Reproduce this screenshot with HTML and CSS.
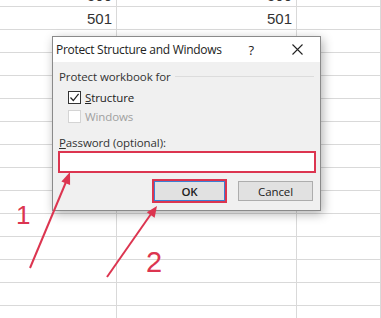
FILE: index.html
```html
<!DOCTYPE html>
<html lang="en">

<head>
    <meta charset="UTF-8">
    <meta name="viewport" content="width=device-width, initial-scale=1.0">
    <title>Protect Structure and Windows</title>
    <link rel="stylesheet" href="styles.css">
</head>

<body>
    <div class="sheet">
        <div class="row"><div class="cell">500</div><div class="cell">500</div><div class="cell"></div></div>
        <div class="row"><div class="cell">501</div><div class="cell">501</div><div class="cell"></div></div>
        <div class="row"><div class="cell">502</div><div class="cell">502</div><div class="cell"></div></div>
        <div class="row"><div class="cell"></div><div class="cell"></div><div class="cell"></div></div>
        <div class="row"><div class="cell"></div><div class="cell"></div><div class="cell"></div></div>
        <div class="row"><div class="cell"></div><div class="cell"></div><div class="cell"></div></div>
        <div class="row"><div class="cell"></div><div class="cell"></div><div class="cell"></div></div>
        <div class="row"><div class="cell"></div><div class="cell"></div><div class="cell"></div></div>
        <div class="row"><div class="cell"></div><div class="cell"></div><div class="cell"></div></div>
        <div class="row"><div class="cell"></div><div class="cell"></div><div class="cell"></div></div>
        <div class="row"><div class="cell"></div><div class="cell"></div><div class="cell"></div></div>
        <div class="row"><div class="cell"></div><div class="cell"></div><div class="cell"></div></div>
        <div class="row"><div class="cell"></div><div class="cell"></div><div class="cell"></div></div>
        <div class="row"><div class="cell"></div><div class="cell"></div><div class="cell"></div></div>
        <div class="row"><div class="cell"></div><div class="cell"></div><div class="cell"></div></div>
    </div>

    <div class="dialog">
        <div class="title-bar">
            <span class="title">Protect Structure and Windows</span>
            <span class="help">?</span>
            <svg class="close" width="11" height="11" viewBox="0 0 11 11">
                <path d="M0.5 0.5 L10.5 10.5 M10.5 0.5 L0.5 10.5" stroke="#222" stroke-width="1.1" fill="none" />
            </svg>
        </div>
        <div class="dlg-body">
            <div class="group-head">
                <span>Protect workbook for</span>
                <span class="group-line"></span>
            </div>
            <div class="check-row">
                <span class="box">
                    <svg width="11" height="11" viewBox="0 0 11 11">
                        <path d="M1.5 5.5 L4.3 8.5 L9.6 1.8" stroke="#222" stroke-width="1.2" fill="none" />
                    </svg>
                </span>
                <span><u>S</u>tructure</span>
            </div>
            <div class="check-row disabled">
                <span class="box"></span>
                <span>Windows</span>
            </div>
            <div class="pw-label"><u>P</u>assword (optional):</div>
            <div class="pw-input"></div>
            <div class="buttons">
                <div class="btn btn-ok"><span>OK</span></div>
                <div class="btn btn-cancel">Cancel</div>
            </div>
        </div>
    </div>

    <svg class="marks" width="381" height="318" viewBox="0 0 381 318">
        <line x1="30" y1="268" x2="66" y2="182" stroke="#dc3550" stroke-width="2" />
        <polygon points="70,172 61.4,181.6 70.1,185" fill="#dc3550" />
        <line x1="107" y1="277" x2="151" y2="214" stroke="#dc3550" stroke-width="2" />
        <polygon points="157,206 146.8,212.3 154.6,217.8" fill="#dc3550" />
    </svg>
    <span class="num num-1">1</span>
    <span class="num num-2">2</span>
</body>

</html>
```

FILE: styles.css
```css
body {
    margin: 0;
    width: 381px;
    height: 318px;
    overflow: hidden;
    position: relative;
    background-color: #fff;
    font-family: "Liberation Sans", Arial, sans-serif;
}

.sheet {
    margin-top: -16px;
}

.row {
    display: grid;
    grid-template-columns: 117px 180px 1fr;
    height: 23px;
}

.cell {
    box-sizing: border-box;
    border-right: 1px solid #d9d9d9;
    border-bottom: 1px solid #d9d9d9;
    text-align: right;
    padding: 3px 4px 0 0;
    font-size: 15px;
    line-height: 18px;
    color: #333;
}

.dialog {
    position: absolute;
    left: 52px;
    top: 36px;
    width: 269px;
    height: 175px;
    box-sizing: border-box;
    border: 1px solid #8a8a8a;
    background-color: #f0f0f0;
    box-shadow: 2px 3px 10px rgba(0, 0, 0, 0.3);
    font-family: "Open Sans", "Liberation Sans", sans-serif;
    font-size: 11.5px;
    letter-spacing: -0.1px;
    color: #222;
}

.title-bar {
    display: flex;
    align-items: center;
    height: 25px;
    background-color: #fff;
    padding-left: 3px;
}

.title {
    flex: 1;
    font-size: 12px;
    letter-spacing: -0.3px;
}

.help {
    font-size: 13px;
    margin-right: 38px;
}

.close {
    margin-right: 17px;
}

.dlg-body {
    padding: 7px 6px 0 6px;
}

.group-head {
    display: flex;
    align-items: center;
    gap: 4px;
    height: 14px;
    color: #333;
}

.group-line {
    flex: 1;
    height: 1px;
    background-color: #dcdcdc;
}

.check-row {
    display: flex;
    align-items: center;
    gap: 4px;
    height: 13px;
    margin-left: 9px;
    margin-top: 8px;
}

.check-row + .check-row {
    margin-top: 6px;
}

.box {
    box-sizing: border-box;
    width: 13px;
    height: 13px;
    border: 1px solid #333;
    background-color: #fff;
    display: flex;
    align-items: center;
    justify-content: center;
}

.disabled {
    color: #a0a0a0;
}

.disabled .box {
    border-color: #d4d4d4;
}

.pw-label {
    margin-top: 13px;
    height: 14px;
    line-height: 14px;
    color: #333;
}

.pw-input {
    margin-top: 1px;
    margin-left: -1px;
    margin-right: -2px;
    height: 22px;
    box-sizing: border-box;
    border: 2px solid #dc3550;
    background-color: #fff;
}

.buttons {
    display: flex;
    justify-content: flex-end;
    align-items: center;
    gap: 11px;
    margin-top: 6px;
    padding-right: 1px;
}

.btn {
    box-sizing: border-box;
    width: 75px;
    height: 20px;
    display: flex;
    align-items: center;
    justify-content: center;
    background-color: #e1e1e1;
    border: 1px solid #adadad;
    color: #222;
}

.btn-ok {
    height: 24px;
    border: 2px solid #dc3550;
    padding: 0;
}

.btn-ok span {
    box-sizing: border-box;
    width: 100%;
    height: 100%;
    display: flex;
    align-items: center;
    justify-content: center;
    border: 1px solid #3b7fd4;
    font-weight: 600;
}

.marks {
    position: absolute;
    left: 0;
    top: 0;
}

.num {
    position: absolute;
    font-family: "Liberation Sans", Arial, sans-serif;
    color: #dc3550;
    line-height: 1;
}

.num-1 {
    left: 16px;
    top: 202px;
    font-size: 26px;
}

.num-2 {
    left: 146px;
    top: 248px;
    font-size: 29px;
}
```
